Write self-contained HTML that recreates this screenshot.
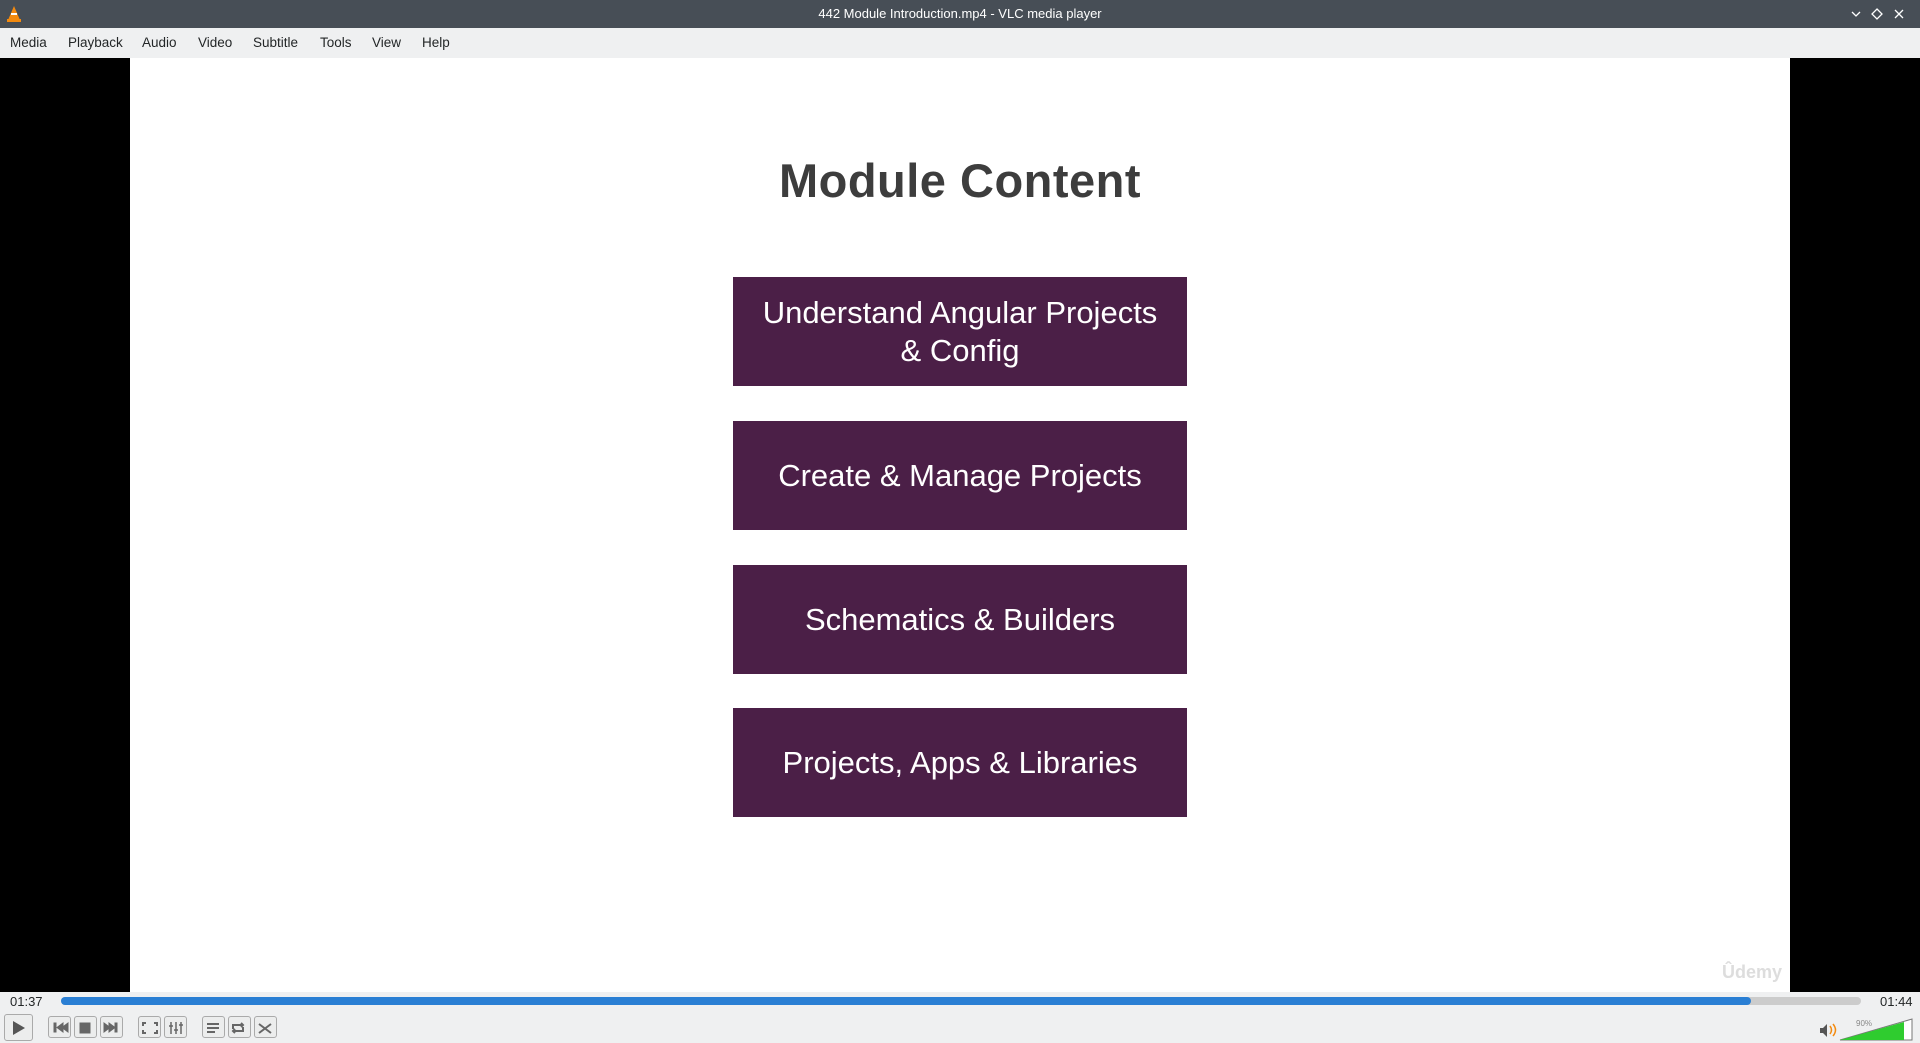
<!DOCTYPE html>
<html><head><meta charset="utf-8"><style>
*{margin:0;padding:0;box-sizing:border-box}
body{width:1920px;height:1043px;overflow:hidden;background:#000;font-family:"Liberation Sans",sans-serif;position:relative}
.tb{position:absolute;left:0;top:0;width:1920px;height:28px;background:#474e56;color:#fff;font-size:13px;text-align:center;line-height:28px}
.menu{position:absolute;left:0;top:28px;width:1920px;height:30px;background:#eff0f1;font-size:13.5px;color:#232627}
.menu span{position:absolute;top:7px}
.video{position:absolute;left:130px;top:58px;width:1660px;height:934px;background:#fff}
h1{position:absolute;left:0;width:1920px;top:153px;text-align:center;font-size:47px;font-weight:bold;color:#3d3d3d;letter-spacing:0.5px}
.box{position:absolute;left:733px;width:454px;height:109px;background:#4b1f47;color:#fff;font-size:31px;display:flex;align-items:center;justify-content:center;text-align:center;line-height:38px}
.ctrl{position:absolute;left:0;top:992px;width:1920px;height:51px;background:#eff0f1}
.t{position:absolute;font-size:13px;color:#232627;top:994px}
.bar{position:absolute;left:61px;top:997px;width:1800px;height:8px;border-radius:4px;background:#ccc}
.fill{position:absolute;left:61px;top:997px;width:1690px;height:8px;border-radius:4px;background:#2a7fd4}
.b{position:absolute;top:1016px;width:23px;height:22px;border:1px solid #aaa;border-radius:3px;background:#eceded}
</style></head><body>
<div class="tb">442 Module Introduction.mp4 - VLC media player</div>
<svg style="position:absolute;left:6px;top:5px" width="16" height="18"><polygon points="8,1 14,15 2,15" fill="#f38a0f"/><rect x="1" y="14" width="14" height="3" fill="#f38a0f"/><rect x="5" y="8" width="6" height="2" fill="#fff"/></svg>
<svg style="position:absolute;left:1850px;top:8px" width="65" height="14" stroke="#fff" stroke-width="1.3" fill="none"><path d="M2,4 L6,8 L10,4"/><path d="M27,1 L32,6 L27,11 L22,6Z"/><path d="M45,2 L53,10 M53,2 L45,10"/></svg>
<div class="menu"><span style="left:10px">Media</span><span style="left:68px">Playback</span><span style="left:142px">Audio</span><span style="left:198px">Video</span><span style="left:253px">Subtitle</span><span style="left:320px">Tools</span><span style="left:372px">View</span><span style="left:422px">Help</span></div>
<div class="video"></div>
<h1>Module Content</h1>
<div class="box" style="top:277px">Understand Angular Projects<br>&amp; Config</div>
<div class="box" style="top:421px">Create &amp; Manage Projects</div>
<div class="box" style="top:565px">Schematics &amp; Builders</div>
<div class="box" style="top:708px">Projects, Apps &amp; Libraries</div>
<div style="position:absolute;left:1722px;top:962px;color:#ddd;font-size:18px;font-weight:bold">Ûdemy</div>
<div class="ctrl"></div>
<div class="t" style="left:10px">01:37</div><div class="t" style="left:1880px">01:44</div>
<div class="bar"></div><div class="fill"></div>
<div class="b" style="left:4px;top:1014px;width:29px;height:27px"></div>
<svg style="position:absolute;left:12px;top:1020px" width="14" height="16"><polygon points="1,1 13,8 1,15" fill="#555"/></svg>
<div class="b" style="left:48px"></div><div class="b" style="left:74px"></div><div class="b" style="left:100px"></div>
<div class="b" style="left:138px"></div><div class="b" style="left:164px"></div>
<div class="b" style="left:202px"></div><div class="b" style="left:228px"></div><div class="b" style="left:254px"></div>
<svg style="position:absolute;left:48px;top:1016px" width="240" height="24" fill="#666" stroke="#666">
<rect x="6" y="7" width="2" height="9"/><polygon points="15,7 9,11.5 15,16"/><polygon points="20,7 14,11.5 20,16"/>
<rect x="32" y="7" width="10" height="10"/>
<polygon points="56,7 62,11.5 56,16"/><polygon points="61,7 67,11.5 61,16"/><rect x="67" y="7" width="2" height="9"/>
<path d="M95,10V7h3M106,7h3v3M109,14v3h-3M98,17h-3v-3" fill="none" stroke-width="2"/>
<path d="M123,6v12M128,6v12M133,6v12M121,10h4M126,14h4M131,9h4" fill="none" stroke-width="1.5"/>
<path d="M159,8h12M159,12h12M159,16h8" fill="none" stroke-width="2"/>
<path d="M185,13v-4h10M193,7l2,2-2,2M195,11v4h-10M187,17l-2-2 2-2" fill="none" stroke-width="2"/>
<path d="M211,8l12,9M211,17l12-9" fill="none" stroke-width="2"/>
</svg>
<svg style="position:absolute;left:1818px;top:1018px" width="100" height="24"><path d="M2,10h3l4-4v13l-4-4H2z" fill="#555"/><path d="M12,8q3,4 0,8M15,6q5,6 0,12" stroke="#f38a0f" fill="none" stroke-width="1.5"/><polygon points="22,22 94,22 94,1" fill="#fff" stroke="#777"/><polygon points="22,22 86,22 86,4" fill="#2fcc2f"/><text x="38" y="8" font-size="8" fill="#888" font-family="Liberation Sans">90%</text></svg>
</body></html>
